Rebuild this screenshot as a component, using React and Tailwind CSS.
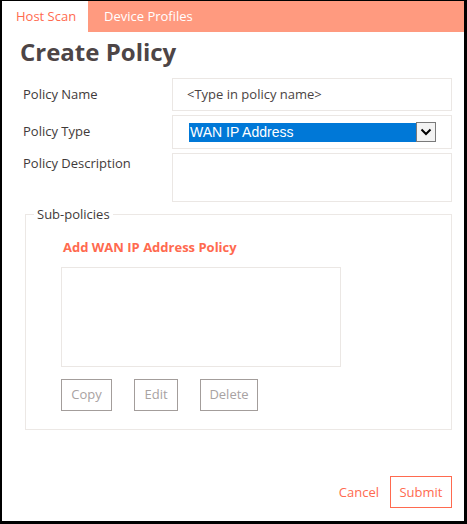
const font = { fontFamily: '"Open Sans", "Noto Sans", sans-serif' };

function Row({ label, children, height, labelTop }) {
  return (
    <div className="flex">
      <div
        className={`w-[170px] pl-[21px] text-[13px] text-[#3f3a3a] flex ${labelTop ? "items-start pt-[1px]" : "items-center"}`}
        style={{ height }}
      >
        {label}
      </div>
      <div
        className="w-[280px] border border-[#ebe7e4] bg-white"
        style={{ height }}
      >
        {children}
      </div>
    </div>
  );
}

export default function App() {
  return (
    <div
      className="w-[467px] h-[524px] bg-white border-t border-l-2 border-r-[3px] border-b-[3px] border-black flex flex-col"
      style={font}
    >
      {/* Tabs */}
      <div className="flex h-[31px] shrink-0">
        <div className="w-[86px] pl-[14px] flex items-center text-[13px] text-[#ff6a4f]">
          Host Scan
        </div>
        <div className="flex-1 bg-[#ff9a7f] pl-[16px] flex items-center text-[13px] text-white">
          Device Profiles
        </div>
      </div>

      <h1 className="pl-[18px] text-[24px] font-bold text-[#4d4546] leading-[40px]">
        Create Policy
      </h1>

      {/* Form */}
      <div className="mt-[6px] flex flex-col gap-[4px]">
        <Row label="Policy Name" height="33px">
          <div className="h-full flex items-center pl-[14px] text-[13px] text-[#4a4343]">
            &lt;Type in policy name&gt;
          </div>
        </Row>
        <Row label="Policy Type" height="34px">
          <div className="h-full flex items-center pl-[16px]">
            <div
              className="w-[227px] h-[19px] bg-[#0078d7] text-white text-[14px] leading-[19px] pl-[1px]"
              style={{ fontFamily: '"Liberation Sans", Arial, sans-serif' }}
            >
              WAN IP Address
            </div>
            <div className="w-[20px] h-[20px] border border-[#7a7a7a] bg-[#f3f3f3] flex items-center justify-center">
              <svg width="12" height="8" viewBox="0 0 12 8">
                <path d="M1.5 1.5 L6 6 L10.5 1.5" fill="none" stroke="#000" strokeWidth="2" />
              </svg>
            </div>
          </div>
        </Row>
        <Row label="Policy Description" height="49px" labelTop />
      </div>

      {/* Sub-policies */}
      <fieldset className="ml-[23px] w-[427px] mt-[3px] h-[225px] border border-[#ece8e5] px-0">
        <legend className="ml-[8px] px-[3px] text-[13px] text-[#3f3a3a]">Sub-policies</legend>
        <div className="px-[35px] pt-[13px]">
          <div className="pl-[2px] text-[13px] font-bold text-[#ff6a4f] leading-[18px]">
            Add WAN IP Address Policy
          </div>
          <div className="mt-[11px] w-[280px] h-[100px] border border-[#ebe7e4]" />
          <div className="mt-[12px] flex gap-[22px]">
            <button className="w-[51px] h-[32px] border border-[#a39d9b] text-[13px] text-[#a8a2a2]">Copy</button>
            <button className="w-[44px] h-[32px] border border-[#a39d9b] text-[13px] text-[#a8a2a2]">Edit</button>
            <button className="w-[58px] h-[32px] border border-[#a39d9b] text-[13px] text-[#a8a2a2]">Delete</button>
          </div>
        </div>
      </fieldset>

      {/* Footer */}
      <div className="mt-auto mb-[13px] mr-[12px] flex justify-end items-center gap-[11px]">
        <button className="text-[13px] text-[#ff6a4f] pt-[2px]">Cancel</button>
        <button className="w-[62px] h-[32px] pt-[2px] border border-[#ff6a4f] text-[13px] text-[#ff6a4f]">Submit</button>
      </div>
    </div>
  );
}
